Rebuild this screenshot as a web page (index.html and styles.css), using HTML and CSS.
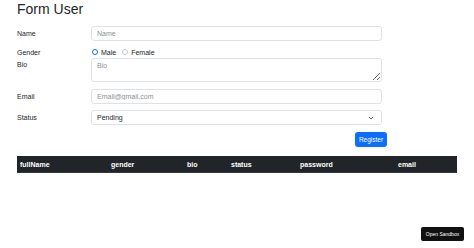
FILE: index.html
```html
<!DOCTYPE html>
<html lang="en">
<head>
    <meta charset="UTF-8">
    <title>Form User</title>
    <link rel="stylesheet" href="styles.css">
</head>
<body>
    <div class="container">
        <h1 class="title">Form User</h1>

        <form class="user-form">
            <div class="form-row row-name">
                <label class="form-label">Name</label>
                <input type="text" class="form-control" placeholder="Name">
            </div>
            <div class="form-row row-gender">
                <label class="form-label">Gender</label>
                <div class="radios">
                    <label class="radio"><span class="dot checked"></span>Male</label>
                    <label class="radio"><span class="dot"></span>Female</label>
                </div>
            </div>
            <div class="form-row row-bio">
                <label class="form-label">Bio</label>
                <textarea class="form-control bio" placeholder="Bio"></textarea>
            </div>
            <div class="form-row">
                <label class="form-label">Email</label>
                <input type="email" class="form-control" placeholder="Email@gmail.com">
            </div>
            <div class="form-row">
                <label class="form-label">Status</label>
                <div class="form-control select">
                    <span>Pending</span>
                    <svg width="6" height="4" viewBox="0 0 6 4"><path d="M1 1l2 2 2-2" fill="none" stroke="#343a40" stroke-width="0.8"/></svg>
                </div>
            </div>
            <div class="actions">
                <button type="button" class="btn-primary">Register</button>
            </div>
        </form>

        <table class="users">
            <thead>
                <tr>
                    <th class="c-name">fullName</th>
                    <th class="c-gender">gender</th>
                    <th class="c-bio">bio</th>
                    <th class="c-status">status</th>
                    <th class="c-pass">password</th>
                    <th>email</th>
                </tr>
            </thead>
            <tbody></tbody>
        </table>
    </div>

    <button class="sandbox">Open Sandbox</button>
</body>
</html>
```

FILE: styles.css
```css
body {
    margin: 0;
    font-family: "Liberation Sans", Arial, sans-serif;
    color: #212529;
    background: #fff;
    width: 474px;
    height: 248px;
    position: relative;
    overflow: hidden;
}

.container {
    padding: 0 17px;
}

.title {
    margin: 0;
    padding-top: 1px;
    font-size: 14px;
    font-weight: 400;
    line-height: 16px;
    height: 25px;
}

.form-row {
    display: flex;
    align-items: center;
    margin-bottom: 6px;
}

.row-name {
    margin-bottom: 5px;
}

.form-label {
    width: 74px;
    font-size: 7px;
    flex-shrink: 0;
}

.form-control {
    box-sizing: border-box;
    width: 291px;
    height: 15px;
    border: 0.6px solid #dee2e6;
    border-radius: 3px;
    padding: 0 5px;
    font-family: inherit;
    font-size: 7px;
    color: #212529;
    background: #fff;
    outline: none;
}

.form-control::placeholder {
    color: #8a9097;
}

.row-gender {
    height: 12px;
    margin-bottom: 0;
}

.radios {
    display: flex;
    gap: 5px;
    font-size: 7px;
}

.radio {
    display: flex;
    align-items: center;
    gap: 3px;
}

.dot {
    box-sizing: border-box;
    width: 6px;
    height: 6px;
    border-radius: 50%;
    border: 0.6px solid #c4c8cc;
    margin-left: 1px;
}

.dot.checked {
    border: 1.8px solid #0d6efd;
}

.row-bio {
    align-items: flex-start;
    margin-bottom: 7px;
}

.row-bio .form-label {
    padding-top: 3px;
}

.bio {
    height: 24px;
    padding-top: 3px;
    resize: vertical;
}

.select {
    display: flex;
    align-items: center;
    justify-content: space-between;
    padding-right: 7px;
}

.actions {
    display: flex;
    justify-content: flex-end;
    width: 370px;
    margin-top: 7px;
}

.btn-primary {
    background: #0d6efd;
    color: #fff;
    border: none;
    border-radius: 3px;
    font-family: inherit;
    font-size: 6.5px;
    height: 15px;
    width: 32px;
    padding: 0;
}

.users {
    margin-top: 9px;
    width: 440px;
    border-collapse: collapse;
}

.users th {
    background: #212529;
    color: #fff;
    font-size: 7px;
    font-weight: 700;
    text-align: left;
    height: 16px;
    padding: 0 3px;
    border-bottom: 1px solid #32383e;
}

.c-name { width: 85px; }
.c-gender { width: 70px; }
.c-bio { width: 38px; }
.c-status { width: 63px; }
.c-pass { width: 92px; }

.sandbox {
    position: absolute;
    right: 10px;
    bottom: 7px;
    background: #111;
    color: #fff;
    border: none;
    border-radius: 2px;
    font-family: inherit;
    font-size: 5px;
    height: 14px;
    width: 43px;
    padding: 0;
}
```
